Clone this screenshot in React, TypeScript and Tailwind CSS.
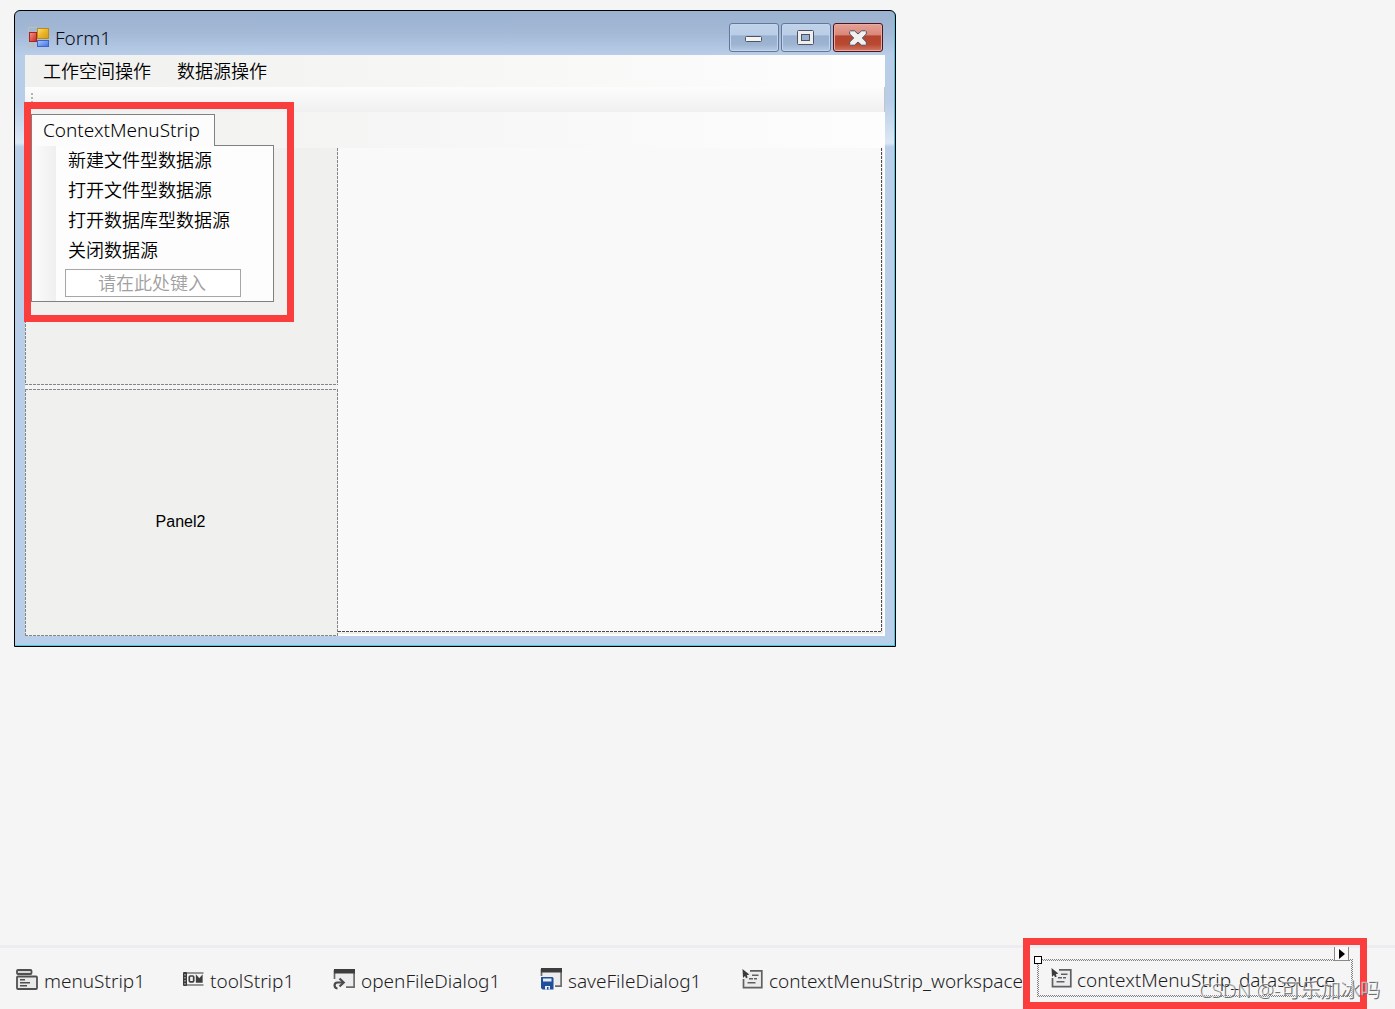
import React from "react";

const uiFont = "font-['Noto_Sans','Noto_Sans_CJK_SC',sans-serif]";

const dashedSides =
  "bg-[repeating-linear-gradient(90deg,#868686_0_3px,transparent_3px_4px),repeating-linear-gradient(180deg,#868686_0_3px,transparent_3px_4px),repeating-linear-gradient(180deg,#868686_0_3px,transparent_3px_4px)] bg-[length:100%_1px,1px_100%,1px_100%] bg-[position:bottom,left,right] bg-no-repeat";

const dashedFrame =
  "bg-[repeating-linear-gradient(90deg,#868686_0_3px,transparent_3px_4px),repeating-linear-gradient(90deg,#868686_0_3px,transparent_3px_4px),repeating-linear-gradient(180deg,#868686_0_3px,transparent_3px_4px),repeating-linear-gradient(180deg,#868686_0_3px,transparent_3px_4px)] bg-[length:100%_1px,100%_1px,1px_100%,1px_100%] bg-[position:top,bottom,left,right] bg-no-repeat";

const darkFrame =
  "bg-[repeating-linear-gradient(90deg,#4a4a4a_0_3px,transparent_3px_4px),repeating-linear-gradient(180deg,#4a4a4a_0_3px,transparent_3px_4px)] bg-[length:100%_1px,1px_100%] bg-[position:bottom,right] bg-no-repeat";

function FormIcon() {
  return (
    <svg width="22" height="21" viewBox="0 0 22 21" aria-hidden="true">
      <defs>
        <linearGradient id="gold" x1="0" y1="0" x2="1" y2="1">
          <stop offset="0" stopColor="#fbe27a" />
          <stop offset=".5" stopColor="#e9b52c" />
          <stop offset="1" stopColor="#d79a10" />
        </linearGradient>
        <linearGradient id="red" x1="0" y1="0" x2="1" y2="1">
          <stop offset="0" stopColor="#f09a8c" />
          <stop offset="1" stopColor="#c22a20" />
        </linearGradient>
        <linearGradient id="blue" x1="0" y1="0" x2="1" y2="1">
          <stop offset="0" stopColor="#a9c8fb" />
          <stop offset="1" stopColor="#3f6fe0" />
        </linearGradient>
      </defs>
      <path d="M.5 5V.5H9M.5 15v5H9M5.500 15v5" fill="none" stroke="#c3bdb5" />
      <rect x="9.500" y="1.500" width="11" height="10" fill="url(#gold)" stroke="#c08a12" />
      <rect x="1.500" y="5.500" width="7" height="9" fill="url(#red)" stroke="#b3201a" />
      <rect x="9.500" y="13.500" width="11" height="6" fill="url(#blue)" stroke="#3b66cc" />
    </svg>
  );
}

function MenuStripIcon() {
  return (
    <svg width="22" height="21" viewBox="0 0 22 21" fill="none" stroke="#505050" aria-hidden="true">
      <rect x="1" y="1" width="14.500" height="4" rx="1" strokeWidth="1.800" fill="#d8d8d8" />
      <rect x="1" y="7.500" width="20" height="12.500" rx="1" strokeWidth="1.800" fill="#e9e9ea" />
      <path d="M4 10.800h5M4 13.800h10M4 16.800h7" strokeWidth="1.500" />
    </svg>
  );
}

function ToolStripIcon() {
  return (
    <svg width="22" height="14" viewBox="0 0 22 14" fill="none" stroke="#3f3f3f" aria-hidden="true">
      <path d="M4 1h17.500M4 13h17.500" strokeWidth="1.500" stroke="#777" />
      <rect x="1" y="0" width="4" height="14" rx="1" fill="#3a3a3a" stroke="none" />
      <path d="M3 2v11" stroke="#d9d9d9" strokeDasharray="1.500 1.500" />
      <rect x="7.300" y="4" width="4.400" height="5.800" rx="1" strokeWidth="1.700" />
      <path d="M14.500 4v6H20V4l-2.700 3.200z" fill="#3f3f3f" strokeWidth="1.300" />
    </svg>
  );
}

function OpenFileIcon() {
  return (
    <svg width="22" height="21" viewBox="0 0 22 21" fill="none" aria-hidden="true">
      <rect x="2" y="3" width="18" height="14" fill="#ececee" />
      <path d="M1.500 10V1M21.100 1v17.200H13" stroke="#6a6a6a" strokeWidth="1.700" />
      <rect x="1" y="0" width="21" height="4.500" fill="#3d3d3d" />
      <path d="M4.500 19.500C.6 19 .6 13.500 4.500 13.500H10" stroke="#4a4a4a" strokeWidth="2.200" />
      <path d="M6.500 9.500l4.200 4-4.200 4" stroke="#4a4a4a" strokeWidth="2.200" />
    </svg>
  );
}

function SaveFileIcon() {
  return (
    <svg width="22" height="22" viewBox="0 0 22 22" fill="none" aria-hidden="true">
      <rect x="2" y="3" width="18" height="14" fill="#ececee" />
      <path d="M1.500 8V1M21.100 1v17.200H15" stroke="#6a6a6a" strokeWidth="1.700" />
      <rect x="1" y="0" width="21" height="4.500" fill="#3d3d3d" />
      <path d="M1 9h11.500l1 1v11.500H2.500L1 20z" fill="#1f4f9c" />
      <rect x="3" y="10.500" width="8.500" height="3" fill="#e6ebf4" />
      <rect x="5" y="18" width="5" height="3.500" fill="#e6ebf4" />
      <rect x="7" y="19" width="1.500" height="2.500" fill="#1f4f9c" />
    </svg>
  );
}

function ContextMenuIcon() {
  return (
    <svg width="21" height="20" viewBox="0 0 21 20" fill="none" aria-hidden="true">
      <path d="M8 1.800h11.800V18.700H1.500V10" fill="#ececee" stroke="#606060" strokeWidth="1.700" />
      <path d="M10 6.300h6.500M7 9.800h4M12 9.800h3M5.500 13.800h8" stroke="#606060" strokeWidth="1.600" />
      <path d="M.500 0l6.800 5.600-2.600.6 1 2.400-1.700.7-1-2.400L1 9z" fill="#3a3a3a" />
    </svg>
  );
}

function CaptionButton({ label, close, children }: { label: string; close?: boolean; children: React.ReactNode }) {
  return (
    <button
      type="button"
      aria-label={label}
      className={
        "flex h-[29px] w-[50px] items-center justify-center rounded-[3px] border " +
        (close
          ? "border-[#4f1420] bg-[linear-gradient(180deg,#e5a296_0,#d98578_42%,#b4452f_43%,#b9482f_75%,#cf7a66_100%)] shadow-[inset_0_0_0_1px_#e9aa9f]"
          : "border-[#61789a] bg-[linear-gradient(180deg,#c0d3ea_0,#b9cde6_42%,#98afcd_43%,#9db4d1_75%,#b5cae4_100%)] pr-px shadow-[inset_0_0_0_1px_#c3d5ea]")
      }
    >
      {children}
    </button>
  );
}

function TitleBar() {
  return (
    <header className="flex h-11 items-center pt-2 pr-3 pl-[13px]">
      <FormIcon />
      <h1 className="ml-[5px] flex-1 pt-0.5 text-[19px] leading-6 text-[#0a0a14]">Form1</h1>
      <div className="flex gap-0.5 pt-px">
        <CaptionButton label="Minimize">
          <svg width="17" height="6" viewBox="0 0 17 6" className="mt-0.5">
            <rect x=".5" y=".5" width="16" height="5" rx="1" fill="#f4f4f4" stroke="#4d5364" />
          </svg>
        </CaptionButton>
        <CaptionButton label="Maximize">
          <svg width="17" height="15" viewBox="0 0 17 15">
            <rect x=".5" y=".5" width="16" height="14" rx="1" fill="#eeeeee" stroke="#4d5364" />
            <rect x="4.500" y="4.500" width="8" height="6" fill="#98afcd" stroke="#4d5364" />
          </svg>
        </CaptionButton>
        <CaptionButton label="Close" close>
          <svg width="18" height="16" viewBox="0 0 18 16">
            <path
              d="M1.500 .8h4L9 4l3.500-3.200h4l.8.8V4l-4 4 4 4v2.400l-.8.8h-4L9 12l-3.500 3.200h-4l-.8-.8V12l4-4-4-4V1.600z"
              fill="#f1f1f1"
              stroke="#4d5364"
              strokeLinejoin="round"
            />
          </svg>
        </CaptionButton>
      </div>
    </header>
  );
}

const menuItems = ["新建文件型数据源", "打开文件型数据源", "打开数据库型数据源", "关闭数据源"];

function ContextMenu() {
  return (
    <section className="absolute top-[47px] -left-px w-[270px] border-[7px] border-[#fa3e3e] pt-[5px] pb-[13px]">
      <div className="relative z-10 -mb-px flex h-8 w-[184px] items-center border border-b-0 border-[#808080] bg-[#fcfcfc] pb-0.5 pl-[11px] text-[19px] leading-6">
        ContextMenuStrip
      </div>
      <div className="w-[243px] border border-[#808080] bg-[#fdfdfd] bg-[linear-gradient(90deg,#fcfcfc,#efefef)] bg-[length:24px_100%] bg-no-repeat pb-1 pl-[33px]">
        <ul role="menu">
          {menuItems.map((item) => (
            <li key={item} role="none">
              <button type="button" role="menuitem" className="block h-[30px] pb-px pl-[3px] text-left text-lg leading-[29px]">
                {item}
              </button>
            </li>
          ))}
        </ul>
        <input
          aria-label="请在此处键入"
          placeholder="请在此处键入"
          className="mt-[3px] block h-7 w-44 border border-[#a6a6a6] bg-white pr-0.5 text-center text-lg placeholder:text-[#a0a0a0]"
        />
      </div>
    </section>
  );
}

function FormWindow() {
  return (
    <main className="w-[882px] max-w-full rounded-t-md border border-black bg-[linear-gradient(180deg,#9bb2d0_0,#a3b9d6_22px,#b8cde8_44px,#b8cde8_90px,#dce8f5_132px,#b8cee9_136px)] bg-[#b8cee9] shadow-[inset_-1px_-1px_0_#45c8e0]">
      <TitleBar />
      <div className="relative mr-2.5 mb-2.5 ml-2.5">
        <nav className="flex h-8 items-center gap-[26px] bg-[linear-gradient(90deg,#f0f0ee,#fdfdfd)] pl-[18px] text-lg leading-6">
          <button type="button">工作空间操作</button>
          <button type="button">数据源操作</button>
        </nav>
        <div className="flex h-[25px] items-start border-r border-[#c4c4c4] bg-[linear-gradient(180deg,#fcfcfc,#f0f0f0)] pt-1.5 pl-1.5">
          <svg width="2" height="10" viewBox="0 0 2 10">
            <path d="M0 0h2v2H0zM0 4h2v2H0zM0 8h2v2H0z" fill="#b4b4b4" />
          </svg>
        </div>
        <div className="h-9 bg-[linear-gradient(90deg,#f0f0ef,#fdfdfd)]" />
        <div className="grid grid-cols-[313fr_547fr]">
          <div className="flex flex-col gap-1 bg-[#f4f4f4]">
            <div className={"h-[237px] bg-[#f0f0ee] " + dashedSides} />
            <div className={"flex h-[247px] items-center justify-center bg-[#f0f0ee] font-['Liberation_Sans',Arial,sans-serif] text-base leading-6 font-normal " + dashedFrame}>
              <span className="pt-[18px] pr-0.5">Panel2</span>
            </div>
          </div>
          <div className="flex border-r-2 border-b-2 border-white bg-[#f0eeec] pr-px pb-0.5">
            <div className={"flex-1 bg-[#f9f9f9] " + darkFrame} />
          </div>
        </div>
        <ContextMenu />
      </div>
    </main>
  );
}

function TrayItem({ icon, name }: { icon: React.ReactNode; name: string }) {
  return (
    <button type="button" className="flex items-start gap-1.5 self-start pt-[19px] text-left text-[19px] leading-7 whitespace-nowrap text-[#1e1e1e]">
      <span className="flex h-6 items-center">{icon}</span>
      {name}
    </button>
  );
}

function ComponentTray() {
  return (
    <footer className="relative grid h-16 grid-cols-[166fr_151fr_207fr_202fr_281fr_344fr] border-t-[3px] border-[#ececf1] pr-7 pl-4">
      <TrayItem icon={<MenuStripIcon />} name="menuStrip1" />
      <TrayItem icon={<ToolStripIcon />} name="toolStrip1" />
      <TrayItem icon={<OpenFileIcon />} name="openFileDialog1" />
      <TrayItem icon={<SaveFileIcon />} name="saveFileDialog1" />
      <TrayItem icon={<ContextMenuIcon />} name="contextMenuStrip_workspace" />
      <div className="-mt-2.5 border-[7px] border-[#fa3e3e] pt-3.5 pr-[7px] pb-[5px] pl-[7px]">
        <div className="relative h-full bg-[repeating-conic-gradient(#808080_0_25%,#f5f5f5_0_50%)] bg-[length:2px_2px] p-0.5">
          <button type="button" className="flex h-full w-full items-center gap-[5px] bg-[#f5f5f5] pl-3 text-[19px] leading-7 whitespace-nowrap text-[#1e1e1e]">
            <ContextMenuIcon />
            <span className="pt-1">contextMenuStrip_datasource</span>
          </button>
          <span className="absolute -top-[3px] -left-[3px] size-2 border border-black bg-white" />
          <button type="button" aria-label="Tasks" className="absolute -top-3 right-1 flex h-3.5 w-[15px] items-center justify-center border-x border-b border-[#8a8a80] bg-[#fafafa]">
            <svg width="6" height="10" viewBox="0 0 6 10">
              <path d="M0 0l6 5-6 5z" fill="#000" />
            </svg>
          </button>
        </div>
      </div>
      <p className="absolute right-[15px] bottom-[5px] text-xl leading-7 whitespace-nowrap text-white/50 [text-shadow:1px_1px_0_#707070]">
        CSDN @-可乐加冰吗
      </p>
    </footer>
  );
}

export default function App() {
  return (
    <div className={"flex min-h-screen flex-col bg-[#f5f5f5] font-[350] text-black " + uiFont}>
      <div className="flex-1 px-3.5 pt-2.5 pb-6">
        <FormWindow />
      </div>
      <ComponentTray />
    </div>
  );
}
